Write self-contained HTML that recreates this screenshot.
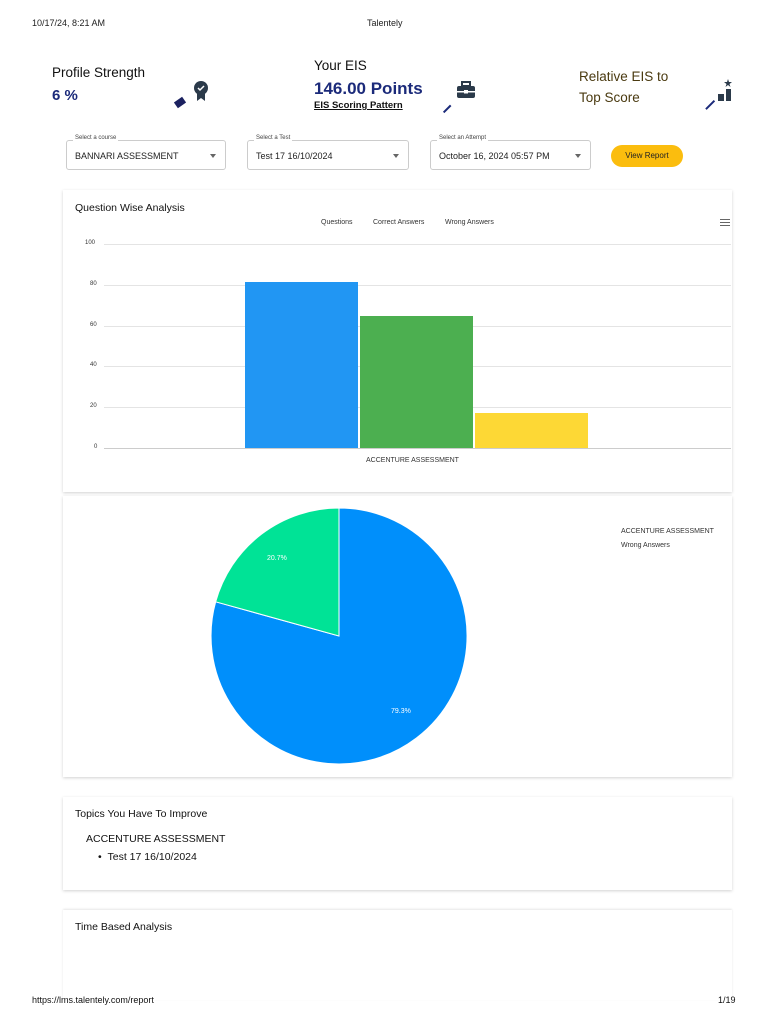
<!DOCTYPE html>
<html><head><meta charset="utf-8"><style>
*{margin:0;padding:0;box-sizing:border-box}
body{width:768px;height:1024px;background:#fff;font-family:"Liberation Sans",sans-serif;position:relative;overflow:hidden;color:#222}
.a{position:absolute}
.card{position:absolute;left:63px;width:669px;background:#fff;box-shadow:0 1px 3px rgba(0,0,0,.18)}
.sel{position:absolute;top:140px;height:30px;border:1px solid #ccc;border-radius:3px;font-size:9px;padding:10px 8px;color:#222}
.sel .l{position:absolute;top:-6px;left:6px;background:#fff;padding:0 2px;font-size:6px;color:#444}
.sel .c{position:absolute;right:9px;top:13px;border-left:3px solid transparent;border-right:3px solid transparent;border-top:4px solid #666}
.yl{position:absolute;left:85px;font-size:6px;color:#333}
.gl{position:absolute;left:104px;width:627px;height:1px;background:#e4e4e4}
</style></head><body>
<div class="a" style="left:32px;top:18px;font-size:9px">10/17/24, 8:21 AM</div>
<div class="a" style="left:367px;top:18px;font-size:9px">Talentely</div>
<div class="a" style="left:52px;top:65px;font-size:13.5px;color:#111">Profile Strength</div>
<div class="a" style="left:52px;top:87px;font-size:15px;font-weight:bold;color:#1b2a7a">6 %</div>
<div class="a" style="left:175px;top:99px;width:10px;height:7px;background:#1b2160;transform:rotate(-35deg)"></div>
<svg class="a" style="left:193px;top:80px" width="16" height="22" viewBox="0 0 16 22"><path d="M4 12 L4 21 L8 18 L12 21 L12 12Z" fill="#2b3a4a"/><circle cx="8" cy="8" r="7" fill="#2b3a4a"/><path d="M5 8 L7 10 L11 6" stroke="#fff" stroke-width="1.5" fill="none"/></svg>
<div class="a" style="left:314px;top:58px;font-size:13.5px;color:#111">Your EIS</div>
<div class="a" style="left:314px;top:79px;font-size:17px;font-weight:bold;color:#1b2a7a">146.00 Points</div>
<div class="a" style="left:314px;top:100px;font-size:9.5px;font-weight:bold;text-decoration:underline;color:#111">EIS Scoring Pattern</div>
<div class="a" style="left:442px;top:108px;width:10px;height:1.5px;background:#1b2a7a;transform:rotate(-45deg)"></div>
<svg class="a" style="left:456px;top:81px" width="20" height="18" viewBox="0 0 20 18"><rect x="6" y="1" width="8" height="4" fill="none" stroke="#2b3a4a" stroke-width="2"/><rect x="1" y="5" width="18" height="12" rx="2" fill="#2b3a4a"/><rect x="1" y="10" width="18" height="1.5" fill="#fff"/><rect x="8" y="9" width="4" height="3.5" fill="#fff"/></svg>
<div class="a" style="left:579px;top:66px;font-size:13.5px;color:#4a3a10;line-height:21px">Relative EIS to<br>Top Score</div>
<div class="a" style="left:704px;top:104px;width:12px;height:1.5px;background:#1b2a7a;transform:rotate(-45deg)"></div>
<svg class="a" style="left:716px;top:78px" width="18" height="24" viewBox="0 0 18 24"><path d="M12 1 L13 4 L16 4 L13.5 6 L14.5 9 L12 7 L9.5 9 L10.5 6 L8 4 L11 4Z" fill="#2b3a4a"/><rect x="2" y="16" width="6" height="7" fill="#2b3a4a"/><rect x="10" y="11" width="5" height="12" fill="#2b3a4a"/></svg>
<div class="sel" style="left:66px;width:160px"><span class="l">Select a course</span>BANNARI ASSESSMENT<span class="c"></span></div>
<div class="sel" style="left:247px;width:162px"><span class="l">Select a Test</span>Test 17 16/10/2024<span class="c"></span></div>
<div class="sel" style="left:430px;width:161px"><span class="l">Select an Attempt</span>October 16, 2024 05:57 PM<span class="c"></span></div>
<div class="a" style="left:611px;top:145px;width:72px;height:22px;background:#fbbd0e;border-radius:11px;font-size:8px;text-align:center;line-height:22px;color:#222">View Report</div>
<div class="card" style="top:190px;height:302px"></div>
<div class="a" style="left:75px;top:202px;font-size:10.5px;color:#111">Question Wise Analysis</div>
<div class="a" style="left:321px;top:219px;font-size:7px;color:#333">Questions</div>
<div class="a" style="left:373px;top:219px;font-size:7px;color:#333">Correct Answers</div>
<div class="a" style="left:445px;top:219px;font-size:7px;color:#333">Wrong Answers</div>
<div class="a" style="left:720px;top:219px;width:10px;height:7px;border-top:1px solid #666;border-bottom:1px solid #666"></div>
<div class="a" style="left:720px;top:222px;width:10px;height:1px;background:#666"></div>
<div class="yl" style="top:240px">100</div><div class="gl" style="top:244px"></div>
<div class="yl" style="left:90px;top:281px">80</div><div class="gl" style="top:285px"></div>
<div class="yl" style="left:90px;top:322px">60</div><div class="gl" style="top:326px"></div>
<div class="yl" style="left:90px;top:362px">40</div><div class="gl" style="top:366px"></div>
<div class="yl" style="left:90px;top:403px">20</div><div class="gl" style="top:407px"></div>
<div class="yl" style="left:94px;top:444px">0</div><div class="gl" style="top:448px;background:#ccc"></div>
<div class="a" style="left:245px;top:282px;width:113px;height:166px;background:#2196f3"></div>
<div class="a" style="left:360px;top:316px;width:113px;height:132px;background:#4caf50"></div>
<div class="a" style="left:475px;top:413px;width:113px;height:35px;background:#fdd835"></div>
<div class="a" style="left:366px;top:457px;font-size:7px;color:#333">ACCENTURE ASSESSMENT</div>
<div class="card" style="top:496px;height:281px"></div>
<svg class="a" style="left:0;top:0" width="768" height="1024"><path d="M339 636 L339 508 A128 128 0 1 1 215.7 601.8Z" fill="#008ffb" stroke="#fff"/><path d="M339 636 L215.7 601.8 A128 128 0 0 1 339 508Z" fill="#00e396" stroke="#fff"/>
<text x="267" y="560" font-size="7" fill="#fff" font-family="Liberation Sans">20.7%</text>
<text x="391" y="713" font-size="7" fill="#fff" font-family="Liberation Sans">79.3%</text></svg>
<div class="a" style="left:621px;top:525px;font-size:7px;color:#333;line-height:14px">ACCENTURE ASSESSMENT<br>Wrong Answers</div>
<div class="card" style="top:797px;height:93px"></div>
<div class="a" style="left:75px;top:808px;font-size:10.5px;color:#111">Topics You Have To Improve</div>
<div class="a" style="left:86px;top:833px;font-size:10.5px;color:#111">ACCENTURE ASSESSMENT</div>
<div class="a" style="left:98px;top:851px;font-size:10.5px;color:#111">•&nbsp;&nbsp;Test 17 16/10/2024</div>
<div class="card" style="top:910px;height:90px;box-shadow:0 -1px 2px rgba(0,0,0,.1)"></div>
<div class="a" style="left:75px;top:921px;font-size:10.5px;color:#111">Time Based Analysis</div>
<div class="a" style="left:32px;top:995px;font-size:9px;color:#111">https://lms.talentely.com/report</div>
<div class="a" style="left:718px;top:995px;font-size:9px;color:#111">1/19</div>
</body></html>
